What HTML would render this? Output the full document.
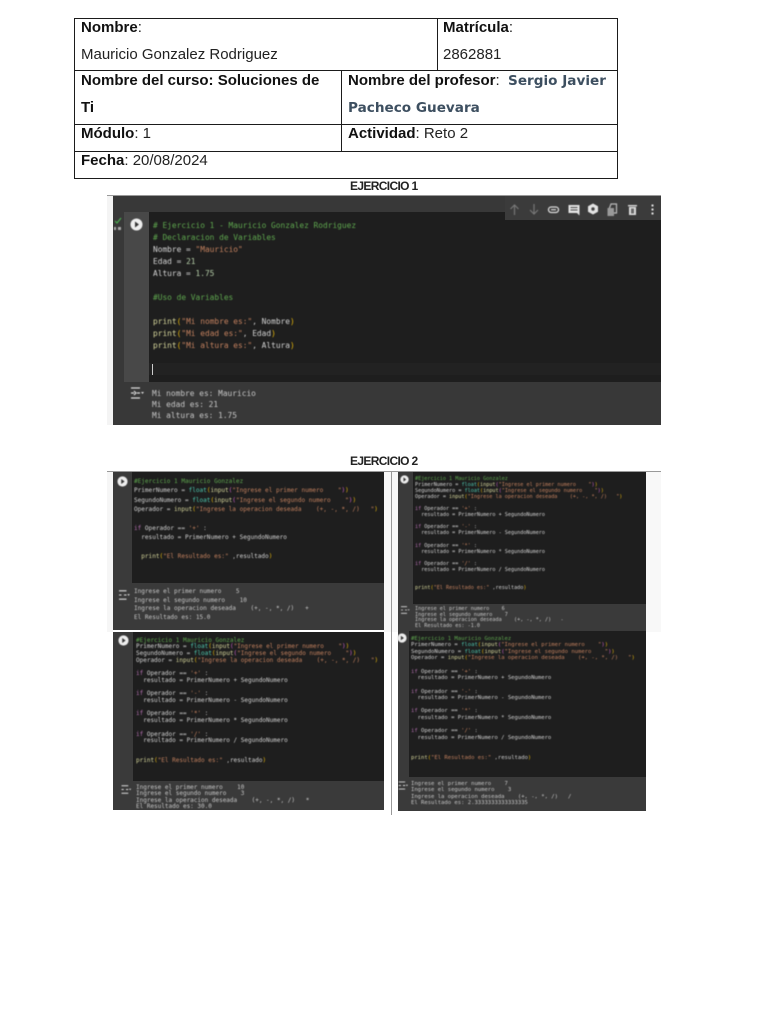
<!DOCTYPE html>
<html lang="es"><head><meta charset="utf-8"><title>Reto 2</title>
<style>
html,body{margin:0;padding:0;background:#fff}
body{width:768px;height:1024px;position:relative;overflow:hidden;font-family:"Liberation Sans",sans-serif;color:#1a1a1a}
.a{position:absolute}
.r{position:absolute;background:#1b1b1b}
.t{position:absolute;font-size:15px;line-height:20px;white-space:nowrap;color:#222;filter:blur(.25px)}
.t b{color:#111}
.n{color:#3d4f60;font-family:"DejaVu Sans",sans-serif;font-weight:bold;font-size:13.6px}
.h{position:absolute;font-weight:bold;font-size:12px;line-height:14px;color:#222;white-space:nowrap;letter-spacing:-.65px;filter:blur(.2px)}
pre{position:absolute;margin:0;font-family:"DejaVu Sans Mono","Liberation Mono",monospace;color:#d4d4d4;white-space:pre}
.c{color:#5fa84f}.s{color:#c5825f}.f{color:#d8d89c}.b{color:#e8b80c}.p{color:#c95fc9}.g{color:#4ec9b0}.k{color:#b46fb0}.o{color:#c8c8c8}
.i{filter:blur(.45px)}.j{filter:blur(.6px)}
</style></head><body>

<div class="r" style="left:74px;top:18px;width:544px;height:1px"></div>
<div class="r" style="left:74px;top:70px;width:544px;height:1px"></div>
<div class="r" style="left:74px;top:124px;width:544px;height:1px"></div>
<div class="r" style="left:74px;top:151px;width:544px;height:1px"></div>
<div class="r" style="left:74px;top:178px;width:544px;height:1px"></div>
<div class="r" style="left:74px;top:18px;width:1px;height:161px"></div>
<div class="r" style="left:617px;top:18px;width:1px;height:161px"></div>
<div class="r" style="left:437px;top:18px;width:1px;height:52px"></div>
<div class="r" style="left:341px;top:70px;width:1px;height:82px"></div>

<div class="t" style="left:81px;top:18px"><b>Nombre</b>:</div>
<div class="t" style="left:81px;top:45px">Mauricio Gonzalez Rodriguez</div>
<div class="t" style="left:443px;top:18px"><b>Matrícula</b>:</div>
<div class="t" style="left:443px;top:45px">2862881</div>
<div class="t" style="left:81px;top:71px"><b>Nombre del curso: Soluciones de</b></div>
<div class="t" style="left:81px;top:98px"><b>Ti</b></div>
<div class="t" style="left:348px;top:71px"><b>Nombre del profesor</b>:&nbsp; <span class="n">Sergio Javier</span></div>
<div class="t" style="left:348px;top:98px"><span class="n">Pacheco Guevara</span></div>
<div class="t" style="left:81px;top:124px"><b>Módulo</b>: 1</div>
<div class="t" style="left:348px;top:124px"><b>Actividad</b>: Reto 2</div>
<div class="t" style="left:81px;top:151px"><b>Fecha</b>: 20/08/2024</div>

<div class="h" style="left:350px;top:179px">EJERCICIO 1</div>

<!-- Ejercicio 1 -->
<div class="a" style="left:107px;top:195px;width:554px;height:1px;background:#999"></div>
<div class="a" style="left:107px;top:196px;width:6px;height:229px;background:#f4f4f4"></div>
<div class="a" style="left:113px;top:196px;width:548px;height:229px;background:#383838"></div>
<div class="a" style="left:124px;top:212px;width:25px;height:170px;background:#484848"></div>
<div class="a" style="left:149px;top:212px;width:512px;height:170px;background:#1e1e1e"></div>
<div class="a" style="left:149px;top:363px;width:512px;height:12px;background:#222"></div>
<div class="a" style="left:505px;top:196px;width:156px;height:24px;background:#3b3b3b"></div>
<div class="a" style="left:152px;top:364px;width:1px;height:11px;background:#ccc"></div>

<svg class="a i" style="left:113px;top:216px" width="12" height="18" viewBox="0 0 12 18"><path d="M2 5l2 2 4-5" fill="none" stroke="#4caf50" stroke-width="1.2"/><rect x="1" y="11" width="2" height="3" fill="#aaa"/><rect x="5" y="11" width="3" height="3" fill="#aaa"/></svg>
<svg class="a i" style="left:130px;top:218px" width="13" height="13" viewBox="0 0 13 13"><circle cx="6.5" cy="6.5" r="6" fill="#eee"/><path d="M5 3.5l4 3-4 3z" fill="#333"/></svg>
<svg class="a i" style="left:130px;top:387px" width="14" height="12" viewBox="0 0 14 12"><path d="M1 1h9M1 6h3M7 6h3M1 11h9M4 4l2 2-2 2" fill="none" stroke="#ddd" stroke-width="1.200"/><path d="M11 5h3l-1.500 2z" fill="#ddd"/></svg>

<svg class="a i" style="left:505px;top:196px" width="156" height="24" viewBox="0 0 156 24">
<g fill="none" stroke="#777" stroke-width="1.200"><path d="M9.500 19V9M5.500 13l4-4 4 4"/><path d="M29 8v10M25 14l4 4 4-4"/></g>
<rect x="43.500" y="11" width="10" height="5.500" rx="2.700" fill="none" stroke="#ddd" stroke-width="1.300"/><path d="M46 13.700h5" stroke="#ddd" stroke-width="1.200"/>
<path d="M63.500 9h11v10.500l-2.500-2.500h-8.500z" fill="#e4e4e4"/><path d="M65.500 11.500h7M65.500 14h7" stroke="#444" stroke-width="1"/>
<path d="M88 7.500l5 2.700v5.600L88 18.500l-5-2.700v-5.600z" fill="#e4e4e4"/><circle cx="88" cy="13" r="1.700" fill="#444"/>
<path d="M106 8h5.500v9h-7v-5z" fill="none" stroke="#bbb" stroke-width="1.200"/><rect x="102.500" y="12" width="6.500" height="8" fill="#999"/>
<path d="M124 11h7v8h-7z" fill="#ddd"/><rect x="123" y="9" width="9" height="1.400" fill="#ddd"/><rect x="126" y="12.500" width="3" height="5" fill="#666"/>
<g fill="#e4e4e4"><rect x="146.500" y="8.500" width="2" height="2"/><rect x="146.500" y="12.500" width="2" height="2"/><rect x="146.500" y="16.500" width="2" height="2"/></g>
</svg>

<pre class="i" style="left:153px;top:220px;font-size:7.85px;line-height:12.05px"><span class="c"># Ejercicio 1 - Mauricio Gonzalez Rodriguez
# Declaracion de Variables</span>
Nombre = <span class="s">"Mauricio"</span>
Edad = <span style="color:#b5cea8">21</span>
Altura = <span style="color:#b5cea8">1.75</span>

<span class="c">#Uso de Variables</span>

<span class="f">print</span><span class="b">(</span><span class="s">"Mi nombre es:"</span>, Nombre<span class="b">)</span>
<span class="f">print</span><span class="b">(</span><span class="s">"Mi edad es:"</span>, Edad<span class="b">)</span>
<span class="f">print</span><span class="b">(</span><span class="s">"Mi altura es:"</span>, Altura<span class="b">)</span></pre>
<pre class="i" style="left:152px;top:388px;font-size:7.85px;line-height:11px;color:#c8c8c8">Mi nombre es: Mauricio
Mi edad es: 21
Mi altura es: 1.75</pre>

<div class="h" style="left:350px;top:454px">EJERCICIO 2</div>

<!-- Ejercicio 2 -->
<div class="a" style="left:107px;top:471px;width:554px;height:1px;background:#999"></div>
<div class="a" style="left:107px;top:472px;width:6px;height:160px;background:#f6f6f6"></div>
<div class="a" style="left:384px;top:472px;width:14px;height:160px;background:#f8f8f8"></div>
<div class="a" style="left:646px;top:472px;width:15px;height:160px;background:#f8f8f8"></div>
<div class="a" style="left:391px;top:472px;width:1px;height:343px;background:#999"></div>

<!-- A -->
<div class="a" style="left:113px;top:472px;width:271px;height:158px;background:#3a3a3a"></div>
<div class="a" style="left:132px;top:472px;width:252px;height:111px;background:#1e1e1e"></div>
<svg class="a i" style="left:117px;top:476px" width="11" height="11" viewBox="0 0 13 13"><circle cx="6.500" cy="6.500" r="6" fill="#eee"/><path d="M5 3.500l4 3-4 3z" fill="#333"/></svg>
<svg class="a i" style="left:118px;top:590px" width="12" height="10" viewBox="0 0 14 12"><path d="M1 1h9M1 6h3M7 6h3M1 11h9" fill="none" stroke="#ddd" stroke-width="1.300"/><path d="M11 5h3l-1.500 2z" fill="#ddd"/></svg>
<pre class="i" style="left:134px;top:477px;font-size:6.06px;line-height:9.35px"><span class="c">#Ejercicio 1 Mauricio Gonzalez</span>
PrimerNumero = <span class="g">float</span><span class="b">(</span><span class="f">input</span><span class="p">(</span><span class="s">"Ingrese el primer numero    "</span><span class="p">)</span><span class="b">)</span>
SegundoNumero = <span class="g">float</span><span class="b">(</span><span class="f">input</span><span class="p">(</span><span class="s">"Ingrese el segundo numero    "</span><span class="p">)</span><span class="b">)</span>
Operador = <span class="f">input</span><span class="b">(</span><span class="s">"Ingrese la operacion deseada    (+, -, *, /)   "</span><span class="b">)</span>

<span class="k">if</span> Operador == <span class="s">'+'</span> :
  resultado = PrimerNumero + SegundoNumero

  <span class="f">print</span><span class="b">(</span><span class="s">"El Resultado es:"</span> ,resultado<span class="b">)</span></pre>
<pre class="i" style="left:134px;top:588px;font-size:6.06px;line-height:8.7px;color:#c8c8c8">Ingrese el primer numero    5
Ingrese el segundo numero    10
Ingrese la operacion deseada    (+, -, *, /)   +
El Resultado es: 15.0</pre>

<!-- B -->
<div class="a" style="left:398px;top:472px;width:248px;height:159px;background:#3a3a3a"></div>
<div class="a" style="left:413px;top:472px;width:233px;height:132px;background:#1e1e1e"></div>
<svg class="a j" style="left:400px;top:475px" width="9" height="9" viewBox="0 0 13 13"><circle cx="6.500" cy="6.500" r="6" fill="#eee"/><path d="M5 3.500l4 3-4 3z" fill="#333"/></svg>
<svg class="a j" style="left:400px;top:606px" width="10" height="8" viewBox="0 0 14 12"><path d="M1 1h9M1 6h3M7 6h3M1 11h9" fill="none" stroke="#ddd" stroke-width="1.300"/><path d="M11 5h3l-1.500 2z" fill="#ddd"/></svg>
<pre class="j" style="left:415px;top:476px;font-size:5.15px;line-height:6.05px"><span class="c">#Ejercicio 1 Mauricio Gonzalez</span>
PrimerNumero = <span class="g">float</span><span class="b">(</span><span class="f">input</span><span class="p">(</span><span class="s">"Ingrese el primer numero    "</span><span class="p">)</span><span class="b">)</span>
SegundoNumero = <span class="g">float</span><span class="b">(</span><span class="f">input</span><span class="p">(</span><span class="s">"Ingrese el segundo numero    "</span><span class="p">)</span><span class="b">)</span>
Operador = <span class="f">input</span><span class="b">(</span><span class="s">"Ingrese la operacion deseada    (+, -, *, /)   "</span><span class="b">)</span>

<span class="k">if</span> Operador == <span class="s">'+'</span> :
  resultado = PrimerNumero + SegundoNumero

<span class="k">if</span> Operador == <span class="s">'-'</span> :
  resultado = PrimerNumero - SegundoNumero

<span class="k">if</span> Operador == <span class="s">'*'</span> :
  resultado = PrimerNumero * SegundoNumero

<span class="k">if</span> Operador == <span class="s">'/'</span> :
  resultado = PrimerNumero / SegundoNumero


<span class="f">print</span><span class="b">(</span><span class="s">"El Resultado es:"</span> ,resultado<span class="b">)</span></pre>
<pre class="j" style="left:415px;top:607px;font-size:5.15px;line-height:5.5px;color:#c8c8c8">Ingrese el primer numero    6
Ingrese el segundo numero    7
Ingrese la operacion deseada    (+, -, *, /)   -
El Resultado es: -1.0</pre>

<!-- C -->
<div class="a" style="left:113px;top:632px;width:271px;height:178px;background:#3a3a3a"></div>
<div class="a" style="left:133px;top:632px;width:251px;height:149px;background:#1e1e1e"></div>
<svg class="a i" style="left:118px;top:635px" width="11" height="11" viewBox="0 0 13 13"><circle cx="6.500" cy="6.500" r="6" fill="#eee"/><path d="M5 3.500l4 3-4 3z" fill="#333"/></svg>
<svg class="a i" style="left:120px;top:785px" width="12" height="9" viewBox="0 0 14 12"><path d="M1 1h9M1 6h3M7 6h3M1 11h9" fill="none" stroke="#ddd" stroke-width="1.300"/><path d="M11 5h3l-1.500 2z" fill="#ddd"/></svg>
<pre class="j" style="left:136px;top:637.5px;font-size:6px;line-height:6.72px"><span class="c">#Ejercicio 1 Mauricio Gonzalez</span>
PrimerNumero = <span class="g">float</span><span class="b">(</span><span class="f">input</span><span class="p">(</span><span class="s">"Ingrese el primer numero    "</span><span class="p">)</span><span class="b">)</span>
SegundoNumero = <span class="g">float</span><span class="b">(</span><span class="f">input</span><span class="p">(</span><span class="s">"Ingrese el segundo numero    "</span><span class="p">)</span><span class="b">)</span>
Operador = <span class="f">input</span><span class="b">(</span><span class="s">"Ingrese la operacion deseada    (+, -, *, /)   "</span><span class="b">)</span>

<span class="k">if</span> Operador == <span class="s">'+'</span> :
  resultado = PrimerNumero + SegundoNumero

<span class="k">if</span> Operador == <span class="s">'-'</span> :
  resultado = PrimerNumero - SegundoNumero

<span class="k">if</span> Operador == <span class="s">'*'</span> :
  resultado = PrimerNumero * SegundoNumero

<span class="k">if</span> Operador == <span class="s">'/'</span> :
  resultado = PrimerNumero / SegundoNumero


<span class="f">print</span><span class="b">(</span><span class="s">"El Resultado es:"</span> ,resultado<span class="b">)</span></pre>
<pre class="j" style="left:136px;top:785px;font-size:6px;line-height:6.3px;color:#c8c8c8">Ingrese el primer numero    10
Ingrese el segundo numero    3
Ingrese la operacion deseada    (+, -, *, /)   *
El Resultado es: 30.0</pre>

<!-- D -->
<div class="a" style="left:398px;top:631px;width:248px;height:180px;background:#3a3a3a"></div>
<div class="a" style="left:409px;top:631px;width:237px;height:146px;background:#1e1e1e"></div>
<svg class="a i" style="left:397px;top:633px" width="10" height="10" viewBox="0 0 13 13"><circle cx="6.500" cy="6.500" r="6" fill="#eee"/><path d="M5 3.500l4 3-4 3z" fill="#333"/></svg>
<svg class="a i" style="left:398px;top:781px" width="10" height="9" viewBox="0 0 14 12"><path d="M1 1h9M1 6h3M7 6h3M1 11h9" fill="none" stroke="#ddd" stroke-width="1.300"/><path d="M11 5h3l-1.500 2z" fill="#ddd"/></svg>
<pre class="j" style="left:411px;top:635.5px;font-size:5.56px;line-height:6.63px"><span class="c">#Ejercicio 1 Mauricio Gonzalez</span>
PrimerNumero = <span class="g">float</span><span class="b">(</span><span class="f">input</span><span class="p">(</span><span class="s">"Ingrese el primer numero    "</span><span class="p">)</span><span class="b">)</span>
SegundoNumero = <span class="g">float</span><span class="b">(</span><span class="f">input</span><span class="p">(</span><span class="s">"Ingrese el segundo numero    "</span><span class="p">)</span><span class="b">)</span>
Operador = <span class="f">input</span><span class="b">(</span><span class="s">"Ingrese la operacion deseada    (+, -, *, /)   "</span><span class="b">)</span>

<span class="k">if</span> Operador == <span class="s">'+'</span> :
  resultado = PrimerNumero + SegundoNumero

<span class="k">if</span> Operador == <span class="s">'-'</span> :
  resultado = PrimerNumero - SegundoNumero

<span class="k">if</span> Operador == <span class="s">'*'</span> :
  resultado = PrimerNumero * SegundoNumero

<span class="k">if</span> Operador == <span class="s">'/'</span> :
  resultado = PrimerNumero / SegundoNumero


<span class="f">print</span><span class="b">(</span><span class="s">"El Resultado es:"</span> ,resultado<span class="b">)</span></pre>
<pre class="j" style="left:411px;top:781px;font-size:5.56px;line-height:6.3px;color:#c8c8c8">Ingrese el primer numero    7
Ingrese el segundo numero    3
Ingrese la operacion deseada    (+, -, *, /)   /
El Resultado es: 2.3333333333333335</pre>

</body></html>
